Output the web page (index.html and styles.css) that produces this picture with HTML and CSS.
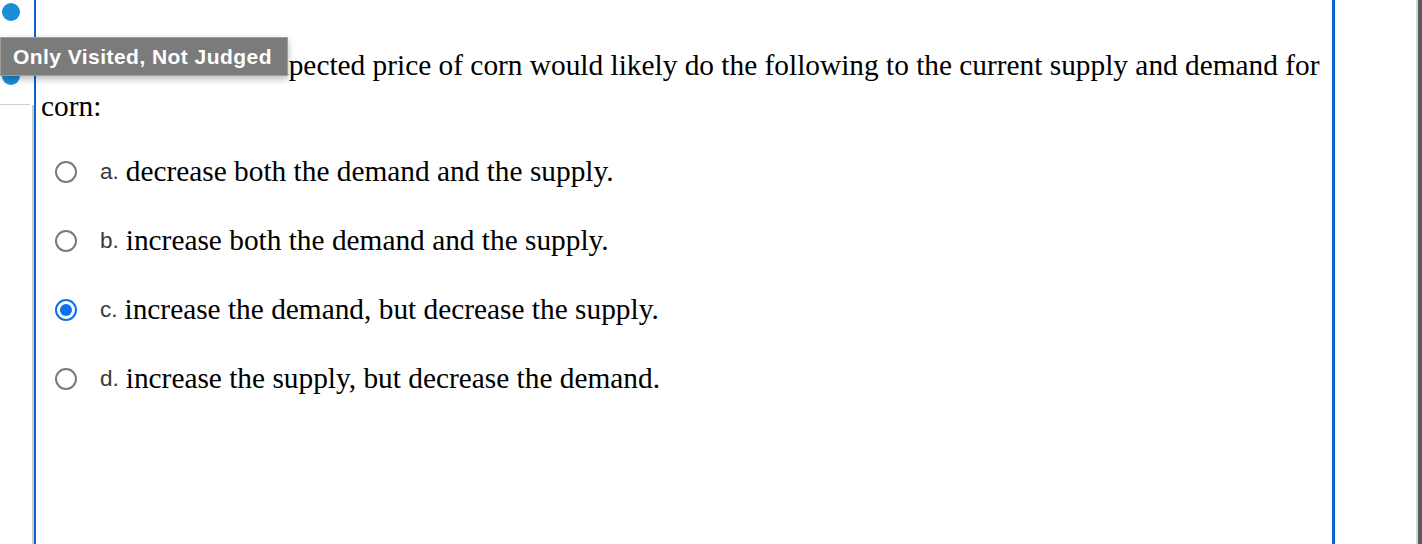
FILE: index.html
```html
<!DOCTYPE html>
<html>
<head>
<meta charset="utf-8">
<link rel="stylesheet" href="styles.css">
</head>
<body>
<div class="page">
  <div class="nav">
    <div class="nav-top">
      <span class="dot"></span>
      <span class="dot"></span>
    </div>
    <div class="nav-rest"></div>
  </div>
  <div class="panel">
    <p class="question">An increase in the expected price of corn would likely do the following to the current supply and demand for corn:</p>
    <div class="options">
      <div class="option"><span class="radio"></span><span class="lbl">a.</span><span class="txt">decrease both the demand and the supply.</span></div>
      <div class="option"><span class="radio"></span><span class="lbl">b.</span><span class="txt">increase both the demand and the supply.</span></div>
      <div class="option"><span class="radio checked"></span><span class="lbl">c.</span><span class="txt">increase the demand, but decrease the supply.</span></div>
      <div class="option"><span class="radio"></span><span class="lbl">d.</span><span class="txt">increase the supply, but decrease the demand.</span></div>
    </div>
  </div>
  <div class="gutter"></div>
  <div class="scroll"></div>
  <div class="tooltip">Only Visited, Not Judged</div>
</div>
</body>
</html>
```
FILE: styles.css
```css
html, body {
  margin: 0;
  padding: 0;
  background: #ffffff;
}
.page {
  position: relative;
  display: flex;
  height: 544px;
  width: 1422px;
  overflow: hidden;
}
.nav {
  width: 34px;
  flex: 0 0 34px;
  display: flex;
  flex-direction: column;
}
.nav-top {
  height: 105px;
  flex: 0 0 105px;
  box-sizing: border-box;
  display: flex;
  flex-direction: column;
  gap: 46px;
  padding: 3px 0 0 2px;
  border-bottom: 1px solid #cfcfcf;
  width: 30px;
}
.dot {
  display: block;
  width: 18px;
  height: 18px;
  border-radius: 50%;
  background: #1a8fd7;
}
.nav-rest {
  flex: 1;
  width: 32px;
  border-right: 2px solid #cccccc;
}
.panel {
  width: 1301px;
  flex: 0 0 1301px;
  box-sizing: border-box;
  border-left: 2px solid #0b62d1;
  border-right: 3px solid #0b62d1;
  padding: 45px 8px 0 5px;
  font-family: "Liberation Serif", "Times New Roman", serif;
  font-size: 29.35px;
  line-height: 41px;
  color: #000;
}
.question {
  margin: 0;
}
.options {
  margin-top: 24px;
  display: flex;
  flex-direction: column;
  gap: 28px;
  padding-left: 14px;
}
.option {
  display: flex;
  align-items: center;
  height: 41px;
}
.radio {
  box-sizing: border-box;
  width: 22px;
  height: 22px;
  border-radius: 50%;
  border: 2px solid #7a7a7a;
  flex: 0 0 22px;
  margin-right: 23px;
  display: flex;
  align-items: center;
  justify-content: center;
}
.radio.checked {
  border-color: #0b70ee;
}
.radio.checked::after {
  content: "";
  width: 12px;
  height: 12px;
  border-radius: 50%;
  background: #0b70ee;
}
.lbl {
  font-family: "Liberation Sans", Arial, sans-serif;
  font-size: 22.5px;
  color: #3a3a3a;
  margin-right: 7px;
}
.gutter {
  flex: 0 0 81px;
}
.scroll {
  flex: 0 0 4px;
  border-left: 2px solid #d2d2d2;
  background: #5a5a5a;
}
.tooltip {
  position: absolute;
  left: 0;
  top: 37px;
  width: 288px;
  height: 39px;
  box-sizing: border-box;
  background: #7b7b7b;
  border: 1px solid #9c9c9c;
  box-shadow: 0 3px 7px rgba(0, 0, 0, 0.28);
  color: #ffffff;
  font-family: "Liberation Sans", Arial, sans-serif;
  font-weight: bold;
  font-size: 21px;
  letter-spacing: 0.45px;
  line-height: 37px;
  padding-left: 12px;
  white-space: nowrap;
}
```
